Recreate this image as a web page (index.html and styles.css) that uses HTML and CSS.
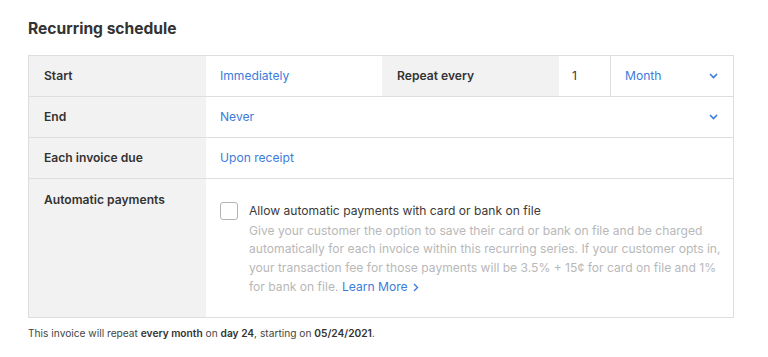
FILE: index.html
```html
<!DOCTYPE html>
<html lang="en">

<head>
    <meta charset="UTF-8">
    <meta name="viewport" content="width=device-width, initial-scale=1.0">
    <title>Recurring schedule</title>
    <link rel="stylesheet" href="styles.css">
</head>

<body>
    <div class="container">
        <h2 class="title">Recurring schedule</h2>

        <div class="schedule">
            <div class="row">
                <div class="label">Start</div>
                <div class="value link half">Immediately</div>
                <div class="label">Repeat every</div>
                <div class="value count">1</div>
                <div class="value link select unit">
                    <span>Month</span>
                    <svg class="chevron" width="9" height="6" viewBox="0 0 9 6"><path d="M1 1l3.5 3.5L8 1" fill="none" stroke="currentColor" stroke-width="1.6"/></svg>
                </div>
            </div>

            <div class="row">
                <div class="label">End</div>
                <div class="value link select grow">
                    <span>Never</span>
                    <svg class="chevron" width="9" height="6" viewBox="0 0 9 6"><path d="M1 1l3.5 3.5L8 1" fill="none" stroke="currentColor" stroke-width="1.6"/></svg>
                </div>
            </div>

            <div class="row">
                <div class="label">Each invoice due</div>
                <div class="value link grow">Upon receipt</div>
            </div>

            <div class="row tall">
                <div class="label">Automatic payments</div>
                <div class="value grow payments">
                    <label class="check">
                        <span class="box"></span>
                        <span>Allow automatic payments with card or bank on file</span>
                    </label>
                    <p class="hint">
                        Give your customer the option to save their card or bank on file and be charged<br>
                        automatically for each invoice within this recurring series. If your customer opts in,<br>
                        your transaction fee for those payments will be 3.5% + 15&cent; for card on file and 1%<br>
                        for bank on file. <a href="#" class="more">Learn More<svg class="arrow" width="6" height="9" viewBox="0 0 6 9"><path d="M1 1l3.5 3.5L1 8" fill="none" stroke="currentColor" stroke-width="1.4"/></svg></a>
                    </p>
                </div>
            </div>
        </div>

        <p class="summary">This invoice will repeat <b>every month</b> on <b>day 24</b>, starting on <b>05/24/2021</b>.</p>
    </div>
</body>

</html>
```

FILE: styles.css
```css
body {
    font-family: Inter, "Open Sans", Arial, sans-serif;
    margin: 0;
    padding: 18px 34px 0 28px;
    background-color: #ffffff;
    color: #373737;
}

.title {
    font-size: 15.6px;
    font-weight: 700;
    line-height: 22px;
    margin: 0 0 15px;
    color: #333333;
}

.schedule {
    border: 1px solid #dedede;
    width: 704px;
    font-size: 12.1px;
}

.row {
    display: flex;
    border-bottom: 1px solid #dedede;
    height: 40px;
}

.row:last-child {
    border-bottom: none;
}

.row.tall {
    height: 138px;
}

.label {
    width: 177px;
    flex: none;
    box-sizing: border-box;
    padding: 0 15px;
    background-color: #f2f2f2;
    font-weight: 600;
    color: #333333;
    line-height: 40px;
}

.tall .label {
    line-height: 20px;
    padding-top: 11px;
}

.value {
    box-sizing: border-box;
    padding: 0 14px;
    line-height: 40px;
}

.link {
    color: #3b7cdc;
}

.half {
    width: 176px;
}

.count {
    width: 52px;
    padding: 0 13px;
    border-right: 1px solid #dedede;
}

.unit {
    flex: 1;
}

.grow {
    flex: 1;
}

.select {
    display: flex;
    justify-content: space-between;
    align-items: center;
    padding-right: 15px;
}

.chevron {
    display: block;
}

.payments {
    line-height: 18.7px;
    padding: 23px 4px 0 14px;
}

.check {
    display: flex;
    align-items: center;
    gap: 11px;
    color: #3a3a3a;
}

.box {
    width: 16px;
    height: 16px;
    border: 1px solid #b4b4b4;
    border-radius: 3px;
    flex: none;
}

.hint {
    margin: 1px 0 0 29px;
    color: #b8b8b8;
    white-space: nowrap;
}

.more {
    color: #3b7cdc;
    text-decoration: none;
}

.arrow {
    display: inline-block;
    margin-left: 5px;
    vertical-align: -1px;
}

.summary {
    font-size: 10.2px;
    margin: 9px 0 0;
    color: #444444;
}

.summary b {
    font-weight: 600;
    color: #333333;
}
```
